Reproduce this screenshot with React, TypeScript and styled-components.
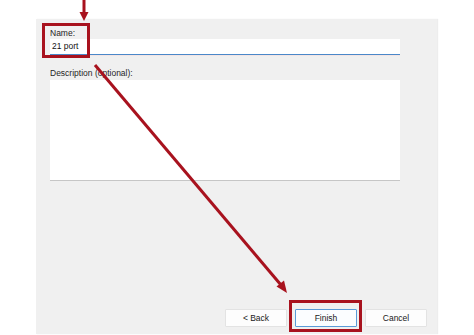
import React from "react";
import styled, { createGlobalStyle } from "styled-components";

const RED = "#a8121e";

const GlobalStyle = createGlobalStyle`
  html, body {
    margin: 0;
    padding: 0;
    background: #ffffff;
  }
  body {
    font-family: "Liberation Sans", Arial, sans-serif;
    color: #1a1a1a;
  }
`;

const Page = styled.div`
  position: relative;
  width: 474px;
  height: 335px;
  overflow: hidden;
  padding: 19px 0 0 36px;
  box-sizing: border-box;
`;

const Dialog = styled.div`
  width: 401px;
  height: 315px;
  background: #f0f0f0;
  box-shadow: 1px 0 1px rgba(0, 0, 0, 0.07);
  display: flex;
  flex-direction: column;
  box-sizing: border-box;
  padding: 8px 0 7px 0;
`;

const Fields = styled.div`
  display: flex;
  flex-direction: column;
  padding: 0 37px 0 14px;
`;

const Label = styled.label<{ $top?: number }>`
  font-size: 8.5px;
  line-height: 12px;
  height: 12px;
  margin-top: ${(p) => p.$top ?? 0}px;
  color: #1e1e1e;
`;

const NameInput = styled.div`
  height: 15px;
  background: #ffffff;
  border-bottom: 1px solid #4a88c9;
  box-shadow: 0 1px 0 #f3e4e4;
  font-size: 8.5px;
  line-height: 15px;
  padding-left: 2px;
  color: #111;
`;

const TextArea = styled.div`
  height: 100px;
  background: #ffffff;
  border-bottom: 1px solid #c6c6c6;
  margin-top: 1px;
`;

const Spacer = styled.div`
  flex: 1;
`;

const Footer = styled.div`
  display: flex;
  justify-content: flex-end;
  gap: 8px;
  padding-right: 10px;
`;

const Button = styled.button<{ $primary?: boolean }>`
  width: 62px;
  height: 18px;
  padding: 0;
  background: ${(p) => (p.$primary ? "#fbfdff" : "#fdfdfd")};
  border: 1px solid ${(p) => (p.$primary ? "#5a9bd8" : "#e3e3e3")};
  border-radius: 1px;
  font-family: "Liberation Sans", Arial, sans-serif;
  font-size: 8.5px;
  color: #1a1a1a;
`;

const Highlight = styled.div<{ $x: number; $y: number; $w: number; $h: number }>`
  position: absolute;
  left: ${(p) => p.$x}px;
  top: ${(p) => p.$y}px;
  width: ${(p) => p.$w}px;
  height: ${(p) => p.$h}px;
  border: 3px solid ${RED};
  box-sizing: border-box;
  pointer-events: none;
`;

const Arrows = styled.svg`
  position: absolute;
  left: 0;
  top: 0;
  pointer-events: none;
`;

export default function App() {
  return (
    <>
      <GlobalStyle />
      <Page>
        <Dialog>
          <Fields>
            <Label>Name:</Label>
            <NameInput>21 port</NameInput>
            <Label $top={12}>Description (optional):</Label>
            <TextArea />
          </Fields>
          <Spacer />
          <Footer>
            <Button>&lt; Back</Button>
            <Button $primary>Finish</Button>
            <Button>Cancel</Button>
          </Footer>
        </Dialog>

        <Highlight $x={42} $y={23} $w={48} $h={35} />
        <Highlight $x={289} $y={300} $w={73} $h={32} />

        <Arrows width="474" height="335" viewBox="0 0 474 335">
          <line x1="84" y1="0" x2="84" y2="13" stroke={RED} strokeWidth="3" />
          <polygon points="79.5,12 88.5,12 84,21" fill={RED} />
          <line x1="95" y1="65" x2="281" y2="285" stroke={RED} strokeWidth="3" />
          <polygon points="276.5,286.5 284,280.5 287,293" fill={RED} />
        </Arrows>
      </Page>
    </>
  );
}
